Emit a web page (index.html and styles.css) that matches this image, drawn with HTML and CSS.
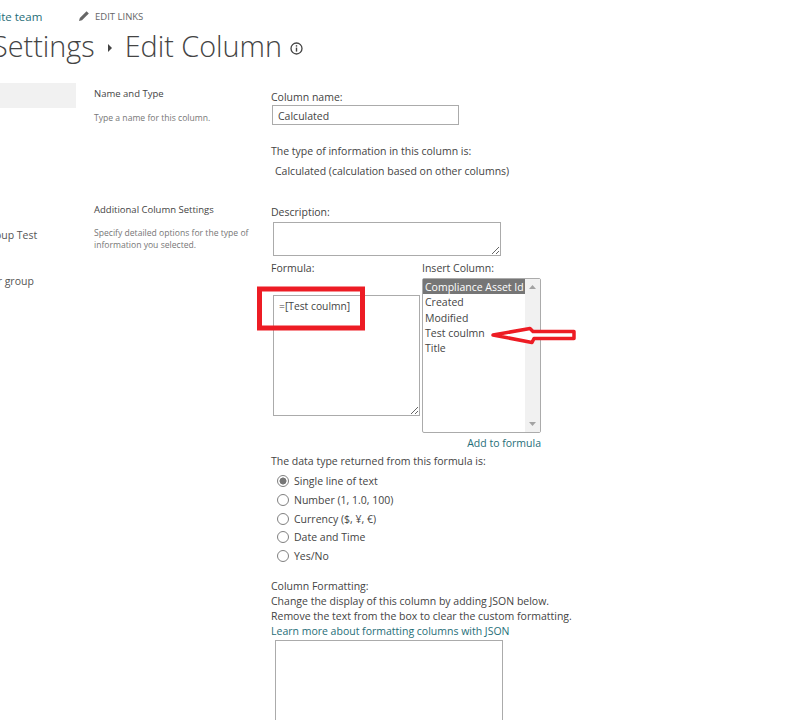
FILE: index.html
```html
<!DOCTYPE html>
<html lang="en">
<head>
<meta charset="utf-8">
<title>Settings - Edit Column</title>
<link rel="stylesheet" href="styles.css">
</head>
<body>
<div class="page">
  <header class="top">
    <a class="site">Site team</a>
    <span class="edit-links">
      <svg class="pencil" width="12" height="12" viewBox="0 0 12 12"><path d="M1 11l.8-3L8.6 1.2l2.2 2.2L4 10.2z" fill="#666"/></svg>
      EDIT LINKS
    </span>
  </header>
  <h1 class="title">
    <span class="crumb">Settings</span>
    <svg class="sep" width="6" height="8" viewBox="0 0 6 8"><path d="M1 0l4 4-4 4z" fill="#444"/></svg>
    <span>Edit Column</span>
    <svg class="info" width="13" height="13" viewBox="0 0 13 13"><circle cx="6.5" cy="6.5" r="5.5" fill="none" stroke="#444" stroke-width="1.3"/><rect x="5.8" y="5.6" width="1.4" height="4" fill="#444"/><rect x="5.8" y="3.2" width="1.4" height="1.4" fill="#444"/></svg>
  </h1>
  <div class="body">
    <nav class="nav">
      <div class="nav-selected"></div>
      <a class="nav-item first">Group Test</a>
      <a class="nav-item second">Owner group</a>
    </nav>
    <div class="desc-col">
      <section class="desc name-desc">
        <h3>Name and Type</h3>
        <p>Type a name for this column.</p>
      </section>
      <section class="desc">
        <h3>Additional Column Settings</h3>
        <p>Specify detailed options for the type of information you selected.</p>
      </section>
    </div>
    <main class="form">
      <label class="lbl">Column name:</label>
      <input class="name-input" type="text" value="Calculated">
      <div class="lbl type-lbl">The type of information in this column is:</div>
      <div class="lbl type-val">Calculated (calculation based on other columns)</div>
      <label class="lbl desc-lbl">Description:</label>
      <textarea class="desc-input"></textarea>
      <div class="formula-row">
        <div class="formula-col">
          <label class="lbl">Formula:</label>
          <textarea class="formula-input">=[Test coulmn]</textarea>
        </div>
        <div class="insert-col">
          <label class="lbl">Insert Column:</label>
          <div class="listbox">
            <ul class="options">
              <li class="selected">Compliance Asset Id</li>
              <li>Created</li>
              <li>Modified</li>
              <li>Test coulmn</li>
              <li>Title</li>
            </ul>
            <div class="scroll">
              <svg width="7" height="4" viewBox="0 0 7 4"><path d="M0 4l3.5-4L7 4z" fill="#a3a3a3"/></svg>
              <svg width="7" height="4" viewBox="0 0 7 4"><path d="M0 0l3.5 4L7 0z" fill="#a3a3a3"/></svg>
            </div>
          </div>
          <a class="link add-link">Add to formula</a>
        </div>
      </div>
      <div class="lbl ret-lbl">The data type returned from this formula is:</div>
      <div class="radios">
        <label class="radio"><input type="radio" name="t" checked>Single line of text</label>
        <label class="radio"><input type="radio" name="t">Number (1, 1.0, 100)</label>
        <label class="radio"><input type="radio" name="t">Currency ($, ¥, €)</label>
        <label class="radio"><input type="radio" name="t">Date and Time</label>
        <label class="radio"><input type="radio" name="t">Yes/No</label>
      </div>
      <div class="fmt">
        <div>Column Formatting:</div>
        <div>Change the display of this column by adding JSON below.</div>
        <div>Remove the text from the box to clear the custom formatting.</div>
        <a class="link">Learn more about formatting columns with JSON</a>
      </div>
      <textarea class="json-input"></textarea>
    </main>
  </div>
  <svg class="marks" width="786" height="720" viewBox="0 0 786 720">
    <rect x="259.500" y="289" width="103" height="39" fill="none" stroke="#ed1c24" stroke-width="5"/>
    <path d="M493 335L530 328.500L533 331.500H574V338.500H534L532 342.500Z" fill="#fff" stroke="#ed1c24" stroke-width="3.500" stroke-linejoin="round"/>
  </svg>
</div>
</body>
</html>
```
FILE: styles.css
```css
* { box-sizing: border-box; }
html, body { margin: 0; padding: 0; background: #fff; }
.page {
  position: relative;
  width: 786px;
  height: 720px;
  overflow: hidden;
  font-family: "Open Sans", "Liberation Sans", sans-serif;
  font-size: 10.500px;
  color: #444;
}
.top {
  display: flex;
  align-items: center;
  height: 14px;
  padding-top: 0;
  margin-left: -8px;
  gap: 30px;
  position: relative;
  top: 9px;
}
.site { color: #1f6e78; font-size: 11.500px; font-weight: 400; width: 56px; white-space: nowrap; }
.edit-links { display: flex; align-items: center; gap: 5px; font-size: 9.500px; color: #666; }
.title {
  display: flex;
  align-items: center;
  margin: 11px 0 0 -8px;
  height: 40px;
  font-size: 28.800px;
  font-weight: 300;
  color: #444;
  white-space: nowrap;
}
.sep { margin: 5px 12px 0 12px; }
.info { margin: 7px 0 0 8px; }
.body {
  display: flex;
  margin-top: 18px;
}
.nav { width: 94px; flex: none; }
.nav-selected { width: 76px; height: 25px; background: #f1f1f1; }
.nav-item { display: block; white-space: nowrap; font-size: 10.500px; color: #555; }
.nav-item.first { margin: 120px 0 0 -17px; }
.nav-item.second { margin: 32px 0 0 -31px; }
.desc-col { width: 177px; flex: none; }
.desc h3 { margin: 0; font-size: 9.500px; font-weight: 400; color: #444; line-height: 14px; }
.desc p { margin: 10px 0 0; font-size: 8.600px; color: #777; line-height: 12px; width: 160px; }
.name-desc { height: 120px; padding-top: 4px; }
.name-desc p { margin-top: 11px; }
.form { flex: 1; min-width: 0; padding-top: 7px; font-size: 10.500px; }
.lbl { display: block; line-height: 15px; white-space: nowrap; }
input[type=text], textarea {
  display: block;
  border: 1px solid #ababab;
  border-radius: 0;
  font-family: inherit;
  font-size: 10.500px;
  color: #444;
  background: #fff;
  margin: 0;
  outline: none;
}
.name-input { width: 187px; height: 20px; margin: 0 0 0 1px !important; padding: 1px 5px 0; }
.type-lbl { margin-top: 19px; }
.type-val { margin: 5px 0 0 4px; }
.desc-lbl { margin-top: 26px; }
.desc-input { width: 228px; height: 34px; margin: 2px 0 0 2px !important; }
.formula-row { display: flex; margin-top: 5px; }
.formula-col { width: 151px; flex: none; }
.formula-input { width: 147px; height: 121px; margin: 19px 0 0 2px !important; padding: 3px 5px; line-height: 14px; font-size: 10.300px !important; }
.insert-col { width: 119px; flex: none; }
.listbox {
  display: flex;
  width: 119px;
  height: 155px;
  margin-top: 2px;
  border: 1px solid #ababab;
  border-radius: 2px;
  margin-left: 0;
}
.options { flex: 1; min-width: 0; margin: 0; padding: 0; list-style: none; white-space: nowrap; overflow: hidden; }
.options li { height: 15.300px; line-height: 17px; padding-left: 2px; }
.options li.selected { background: #767676; color: #fff; }
.scroll {
  width: 15px;
  flex: none;
  background: #f1f1f1;
  display: flex;
  flex-direction: column;
  justify-content: space-between;
  align-items: center;
  padding: 6px 0;
}
.scroll svg { display: block; }
.link { color: #1f6e78; display: block; white-space: nowrap; }
.add-link { text-align: right; line-height: 15px; margin-top: 3px; }
.ret-lbl { margin-top: 3px; }
.radios { display: flex; flex-direction: column; margin-top: 3px; }
.radio { display: flex; align-items: center; height: 18.700px; padding-left: 6px; gap: 5px; }
.radio input { appearance: none; width: 12px; height: 12px; margin: 0; border: 1px solid #808080; border-radius: 50%; background: #fff; }
.radio input:checked { background: radial-gradient(circle, #767676 3.200px, #fff 3.800px); }
.fmt { margin-top: 14px; line-height: 14.700px; white-space: nowrap; }
.json-input { width: 228px; height: 120px; margin: 2px 0 0 4px !important; }
.marks { position: absolute; left: 0; top: 0; pointer-events: none; }
```
